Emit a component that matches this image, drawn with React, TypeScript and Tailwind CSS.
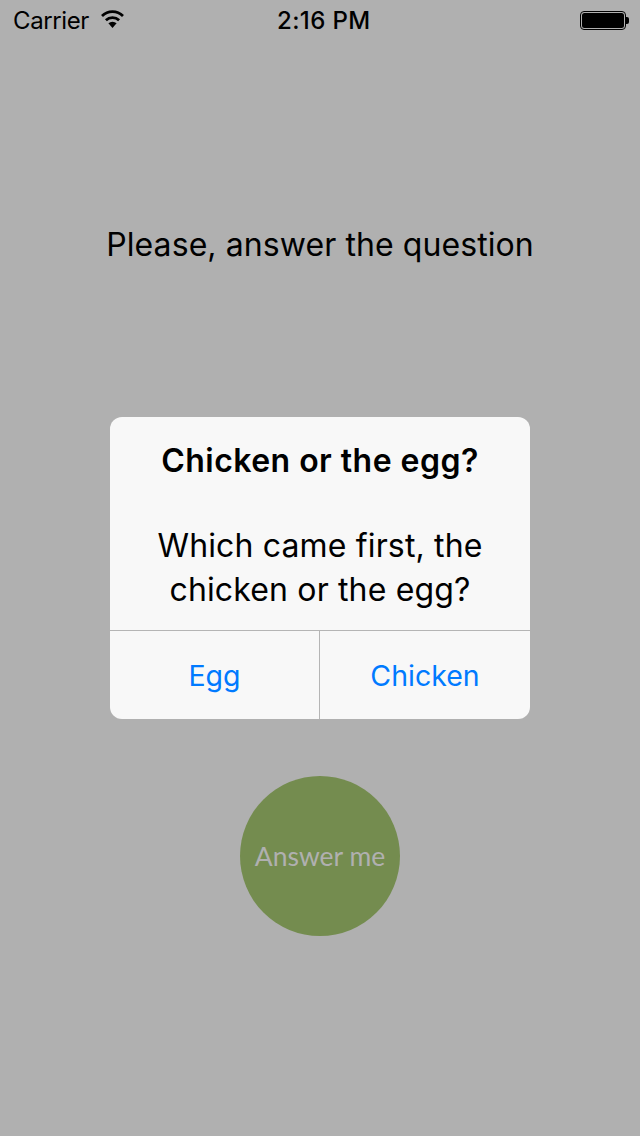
export default function App() {
  const sf = "font-['Inter','Liberation_Sans',sans-serif]";
  return (
    <div className={`w-[640px] h-[1136px] bg-[#b0b0b0] text-black flex flex-col items-center overflow-hidden ${sf}`}>
      <div className="relative w-full h-10 shrink-0 flex items-center justify-between pl-[13px] pr-[11px] pt-[1px]">
        <div className="flex items-center gap-[11px]">
          <span className="text-[24px] leading-[40px] tracking-[-0.4px]">Carrier</span>
          <svg width="25" height="18" viewBox="0 0 25 18" className="-mt-[4px]">
            <path d="M12.5 18 L8.4 13.2 A6.2 6.2 0 0 1 16.6 13.2 Z" fill="#000" />
            <path d="M5.9 10.2 A9.6 9.6 0 0 1 19.1 10.2" fill="none" stroke="#000" strokeWidth="2.8" />
            <path d="M2 6 A15 15 0 0 1 23 6" fill="none" stroke="#000" strokeWidth="2.8" />
          </svg>
        </div>
        <span className="absolute left-[277px] top-[1px] text-[24px] leading-[40px] font-medium tracking-[0.4px]">2:16 PM</span>
        <div className="flex items-center -mt-[1px]">
          <div className="w-[46px] h-[19px] rounded-[4px] border border-black p-[1px]">
            <div className="w-full h-full rounded-[2.5px] bg-black" />
          </div>
          <div className="w-[3px] h-[7px] bg-black rounded-r-[2px]" />
        </div>
      </div>
      <h1 className="mt-[184px] text-[32px] leading-[42px] font-normal tracking-[0.08px] text-center">Please, answer the question</h1>
      <div className="mt-[151px] w-[420px] h-[302px] shrink-0 rounded-[12px] bg-[#f8f8f8] flex flex-col overflow-hidden">
        <div className="h-[213px] shrink-0 flex flex-col items-center">
          <div className="mt-[22px] text-[32px] leading-[44px] font-semibold tracking-[0.46px]">Chicken or the egg?</div>
          <div className="mt-[41px] text-[32px] leading-[44px] tracking-[0.15px] text-center">
            Which came first, the<br />chicken or the egg?
          </div>
        </div>
        <div className="flex-1 flex border-t border-[#b5b5b5] text-[#007aff] text-[28.5px]">
          <div className="w-[210px] border-r border-[#b5b5b5] flex items-center justify-center pt-[2px]">Egg</div>
          <div className="flex-1 flex items-center justify-center pt-[2px]">Chicken</div>
        </div>
      </div>
      <div className="mt-[57px] w-40 h-40 shrink-0 rounded-full bg-[#748c4f] flex items-center justify-center">
        <span className="font-['Lato',sans-serif] text-[26.5px] text-[#b0b0b0] pt-[2px]">Answer me</span>
      </div>
    </div>
  );
}
